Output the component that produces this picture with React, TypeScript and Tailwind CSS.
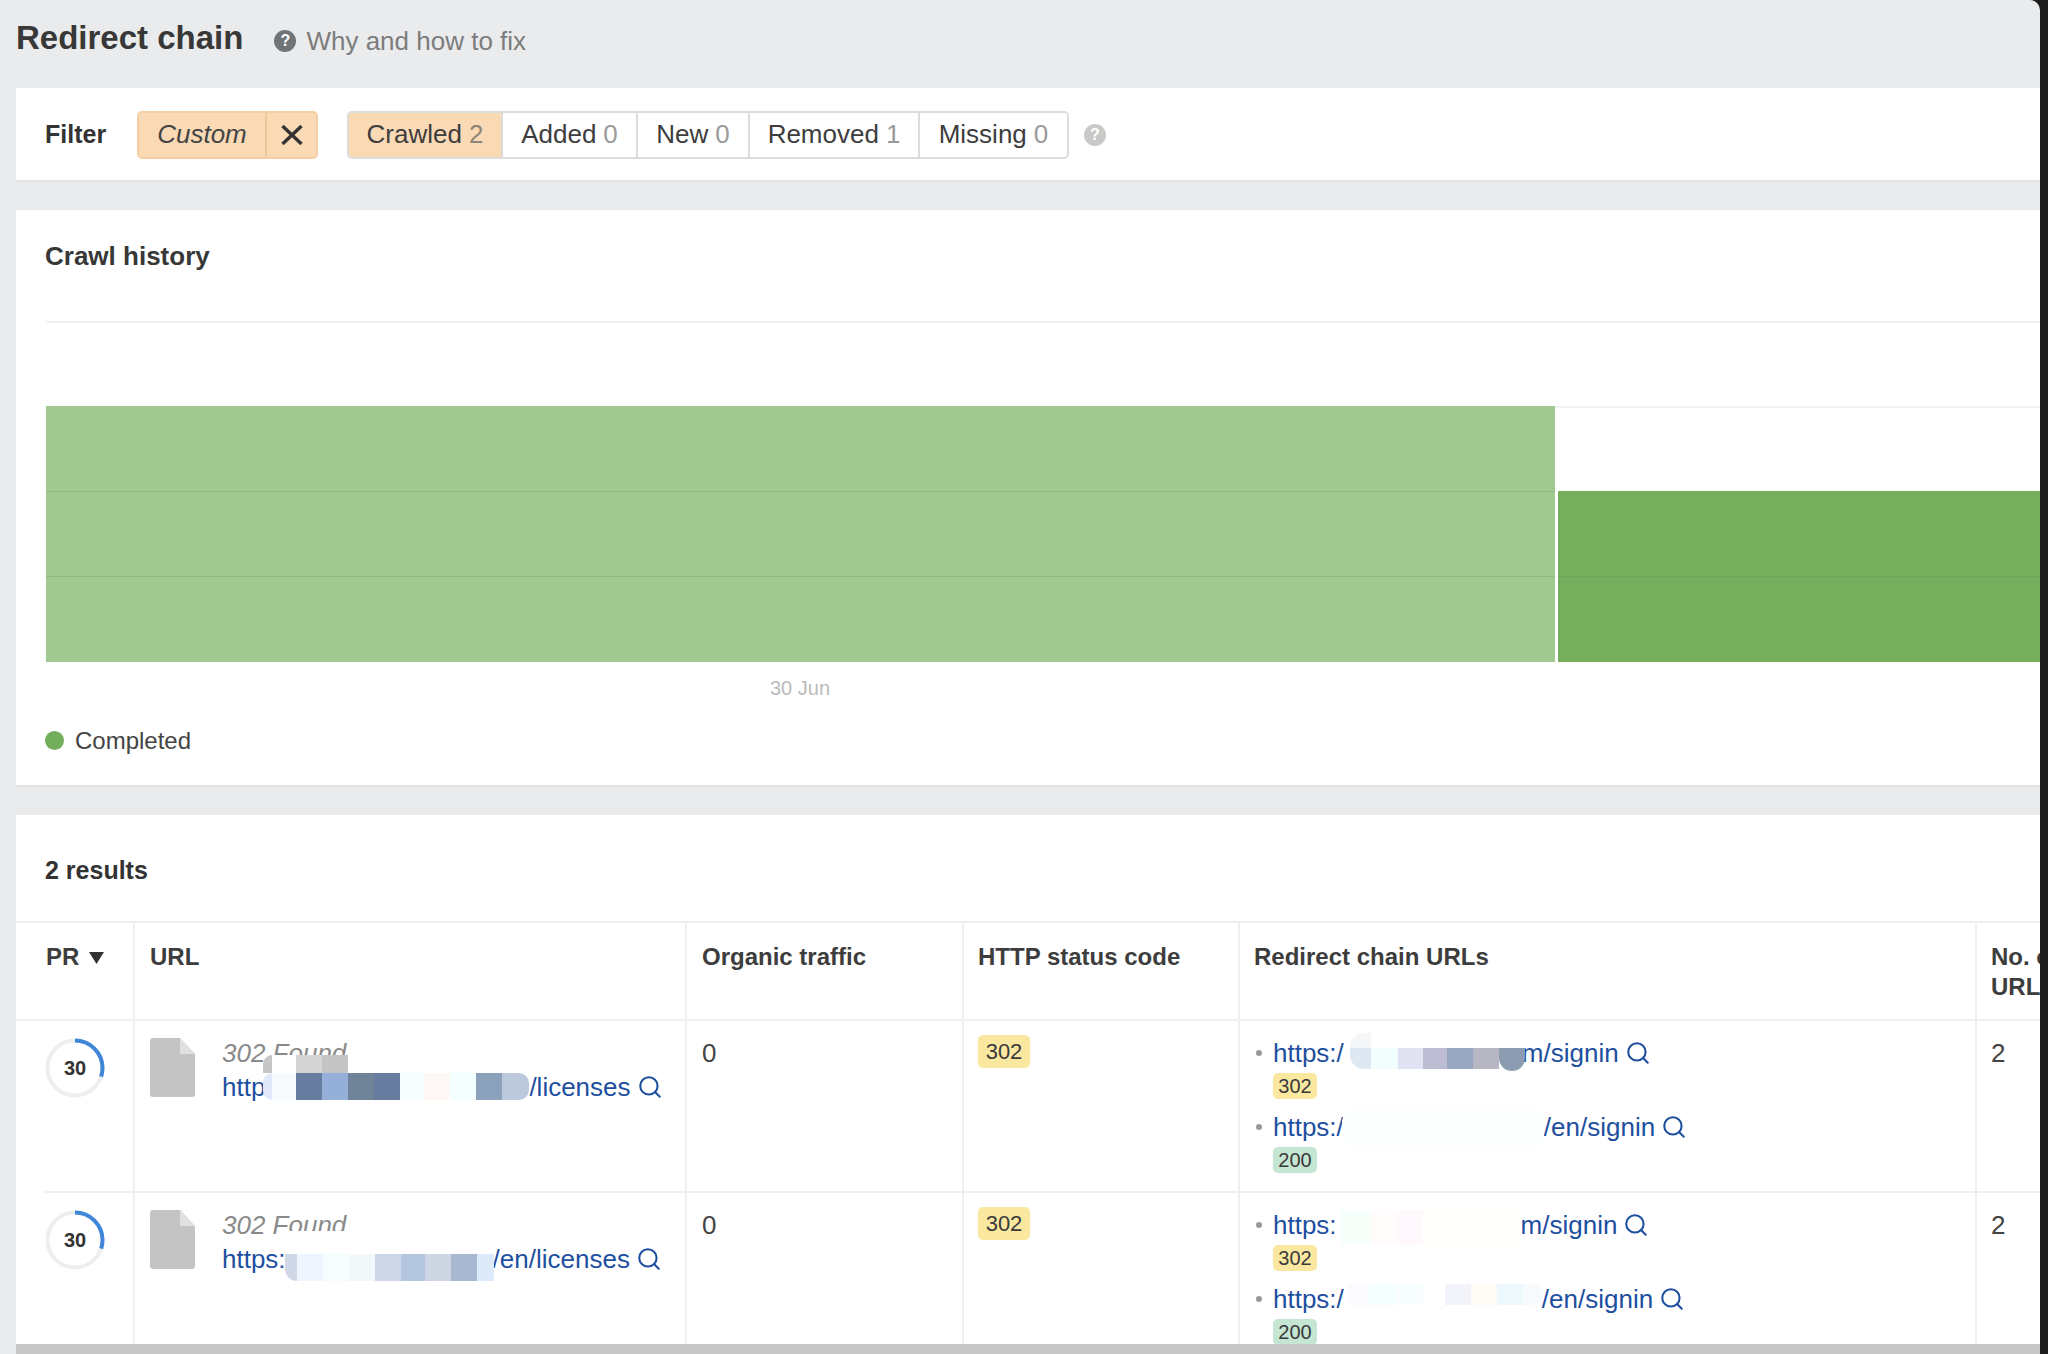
import { Search } from "lucide-react";

// censored parts of the urls, each block is a class string
const urlOneBlocks = [
  "w-[9px] h-[27px] mt-[3px] bg-[#e0e8fa] rounded-l-[12px]",
  "w-[24px] h-[27px] mt-[3px] bg-[#f7fbfe]",
  "w-[26px] h-[27px] mt-[3px] bg-[#667d9f]",
  "w-[26px] h-[27px] mt-[3px] bg-[#95b0d8]",
  "w-[26px] h-[27px] mt-[3px] bg-[#6f8399]",
  "w-[26px] h-[27px] mt-[3px] bg-[#677c9f]",
  "w-[24px] h-[27px] mt-[3px] bg-[#f7feff]",
  "w-[26px] h-[27px] mt-[3px] bg-[#fdf8f5]",
  "w-[26px] h-[27px] mt-[3px] bg-[#f4ffff]",
  "w-[26px] h-[27px] mt-[3px] bg-[#8ca1bb]",
  "w-[27px] h-[27px] mt-[3px] bg-[#bcc8dc] rounded-r-[10px]",
];

const urlTwoBlocks = [
  "w-[12px] h-[27px] mt-[12px] bg-[#d0d7e6] rounded-bl-[12px]",
  "w-[26px] h-[27px] mt-[12px] bg-[#eef5fe]",
  "w-[26px] h-[27px] mt-[12px] bg-[#f6fdfe]",
  "w-[26px] h-[27px] mt-[12px] bg-[#f2f8f9]",
  "w-[26px] h-[27px] mt-[12px] bg-[#cdd7e7]",
  "w-[24px] h-[27px] mt-[12px] bg-[#b4c6df]",
  "w-[26px] h-[27px] mt-[12px] bg-[#ced6e3]",
  "w-[26px] h-[27px] mt-[12px] bg-[#a8b8d0]",
  "w-[17px] h-[27px] mt-[12px] bg-[#ddeafa]",
];

const chainOneBlocks = [
  "w-[21px] h-[36px] -mt-[3px] bg-[linear-gradient(#f5f6f8_0_42%,#dde8f3_42%)] rounded-l-[14px]",
  "w-[27px] h-[21px] mt-[12px] bg-[#f2fdfe]",
  "w-[25px] h-[21px] mt-[12px] bg-[#e2e3f2]",
  "w-[24px] h-[21px] mt-[12px] bg-[#bcbcd2]",
  "w-[26px] h-[21px] mt-[12px] bg-[#98a6c2]",
  "w-[26px] h-[21px] mt-[12px] bg-[#b7b7c4]",
  "w-[26px] h-[23px] mt-[12px] bg-[#8c9cb1] rounded-b-[14px]",
];

const chainTwoBlocks = ["w-[202px] h-[36px] bg-[#fafefd] rounded-[12px]"];

const chainThreeBlocks = [
  "w-[30px] h-[35px] mt-[2px] bg-[#f7fffb]",
  "w-[27px] h-[35px] mt-[2px] bg-[#fffcfb]",
  "w-[25px] h-[35px] mt-[2px] bg-[#fff9fd]",
  "w-[98px] h-[35px] mt-[2px] bg-[#fffffb]",
];

const chainFourBlocks = [
  "w-[21px] h-[21px] mt-[2px] bg-[#fbfaff]",
  "w-[28px] h-[21px] mt-[2px] bg-[#f3feff]",
  "w-[26px] h-[21px] mt-[2px] bg-[#f8feff]",
  "w-[22px] h-[21px] mt-[2px] bg-white",
  "w-[26px] h-[21px] mt-[2px] bg-[#f2f4fa]",
  "w-[26px] h-[21px] mt-[2px] bg-[#fefaf6]",
  "w-[26px] h-[21px] mt-[2px] bg-[#eef9fd]",
  "w-[21px] h-[21px] mt-[2px] bg-[#f7fbfe] rounded-r-[12px]",
];

function Mosaic({ blocks, children }: { blocks: string[]; children?: React.ReactNode }) {
  return (
    <span className="relative flex h-[34px] items-start">
      {blocks.map((b, i) => (
        <span key={i} className={`block shrink-0 ${b}`} />
      ))}
      {children}
    </span>
  );
}

function HelpDot({ className }: { className: string }) {
  return (
    <span className={`flex size-[22px] shrink-0 items-center justify-center rounded-full text-[16px] leading-none font-bold text-white ${className}`}>
      ?
    </span>
  );
}

function Gauge() {
  return (
    <svg width="60" height="60" viewBox="0 0 60 60">
      <circle cx="30" cy="30" r="27.5" fill="none" stroke="#eceef0" strokeWidth="4" />
      <circle
        cx="30"
        cy="30"
        r="27.5"
        fill="none"
        stroke="#3f86d8"
        strokeWidth="4"
        strokeDasharray="51.8 172.8"
        transform="rotate(-90 30 30)"
      />
      <text x="30" y="37" textAnchor="middle" fontSize="20" fontWeight="700" fill="#333">
        30
      </text>
    </svg>
  );
}

function FileIcon() {
  return (
    <svg width="45" height="59" viewBox="0 0 45 59" className="shrink-0">
      <path d="M3 0H30L45 16V56a3 3 0 0 1-3 3H3a3 3 0 0 1-3-3V3a3 3 0 0 1 3-3Z" fill="#c4c4c4" />
      <path d="M30 0L45 16H30Z" fill="#e0e0e0" />
    </svg>
  );
}

function Badge({ code, big }: { code: string; big?: boolean }) {
  const color = code === "200" ? "bg-[#c5e6d3]" : "bg-[#fbe8a0]";
  const size = big ? "w-[52px] h-[33px] text-[22px]" : "w-[44px] h-[26px] text-[20px]";
  return <span className={`flex items-center justify-center rounded-[5px] text-[#3a3a3a] ${color} ${size}`}>{code}</span>;
}

function Lens() {
  return <Search size={26} strokeWidth={1.9} className="ml-[6px] shrink-0 text-[#1e4f9f]" />;
}

function ChainLink({ children, code, first }: { children: React.ReactNode; code: string; first?: boolean }) {
  return (
    <div className={first ? "" : "mt-[11px]"}>
      <div className="flex h-[34px] items-center text-[26px] leading-[34px] text-[#1e4f9f]">
        <span className="mr-[11px] size-[6px] shrink-0 rounded-full bg-[#999]" />
        {children}
        <Lens />
      </div>
      <div className="mt-[3px] pl-[17px]">
        <Badge code={code} />
      </div>
    </div>
  );
}

function Row({ url, chain, last }: { url: React.ReactNode; chain: React.ReactNode; last?: boolean }) {
  const line = last ? "" : "border-b-2 border-[#eeeff1]";
  const cell = `border-r-2 border-[#eeeff1] ${line}`;
  return (
    <div className="grid h-[172px] w-[2061px] grid-cols-[119px_552px_277px_276px_737px_100px] text-[26px] leading-[34px] text-[#444]">
      <div className={`ml-[29px] pt-[17px] ${cell}`}>
        <Gauge />
      </div>
      <div className={`flex gap-[27px] pt-[17px] pl-[15px] ${cell}`}>
        <FileIcon />
        <div className="-mt-[2px]">
          <div className="italic text-[#8a8a8a]">302 Found</div>
          {url}
        </div>
      </div>
      <div className={`pt-[15px] pl-[15px] ${cell}`}>0</div>
      <div className={`pt-[14px] pl-[14px] ${cell}`}>
        <Badge code="302" big />
      </div>
      <div className={`pt-[15px] pl-[16px] ${cell}`}>{chain}</div>
      <div className={`pt-[15px] pl-[14px] ${line}`}>2</div>
    </div>
  );
}

const tabs = [
  { label: "Crawled", n: "2", w: "w-[154px]", active: true },
  { label: "Added", n: "0", w: "w-[135px]" },
  { label: "New", n: "0", w: "w-[112px]" },
  { label: "Removed", n: "1", w: "w-[170px]" },
  { label: "Missing", n: "0", w: "w-[147px]" },
];

export default function App() {
  return (
    <div className="flex h-[1354px] w-[2048px] overflow-hidden bg-[#1c1c1c] font-['Liberation_Sans',Arial,sans-serif]">
      <div className="flex h-full w-[2040px] flex-col overflow-hidden rounded-tr-[10px] bg-[#eaebed] pl-[16px]">
        {/* title */}
        <div className="flex h-[88px] shrink-0 items-start">
          <h1 className="pt-[18px] text-[33px] leading-[40px] font-bold text-[#383838]">Redirect chain</h1>
          <div className="mt-[26px] ml-[31px] flex items-center gap-[10px] text-[26px] leading-[30px] text-[#7c7c7c]">
            <HelpDot className="bg-[#6f7478]" />
            Why and how to fix
          </div>
        </div>

        {/* filter */}
        <div className="flex h-[94px] shrink-0 items-center border-b-2 border-[#e2e3e5] bg-white pt-[1px] pl-[29px] text-[26px]">
          <span className="w-[92px] text-[25px] font-bold text-[#333]">Filter</span>
          <div className="flex h-[48px] w-[181px] rounded-[5px] border-2 border-[#f3cfa6] bg-[#fad9b5]">
            <span className="flex w-[128px] items-center justify-center border-r-2 border-[#ecc79c] italic text-[#444]">Custom</span>
            <span className="flex flex-1 items-center justify-center">
              <svg width="22" height="20" viewBox="0 0 22 20" fill="none" stroke="#333" strokeWidth="3.4">
                <path d="M1.5 1L20.5 19M20.5 1L1.5 19" />
              </svg>
            </span>
          </div>
          <div className="ml-[29px] flex h-[48px] overflow-hidden rounded-[5px] border-2 border-[#dcdcdc]">
            {tabs.map((t) => (
              <span
                key={t.label}
                className={`flex items-center justify-center gap-[7px] border-r-2 border-[#dcdcdc] text-[#3d3d3d] last:border-r-0 ${t.w} ${t.active ? "bg-[#fad9b5]" : "bg-white"}`}
              >
                {t.label}
                <span className={t.active ? "text-[#8d8577]" : "text-[#9a9a9a]"}>{t.n}</span>
              </span>
            ))}
          </div>
          <HelpDot className="ml-[15px] bg-[#c9c9c9]" />
        </div>

        {/* crawl history */}
        <div className="mt-[28px] shrink-0 border-b-2 border-[#e2e3e5] bg-white pl-[29px]">
          <h2 className="pt-[31px] text-[26px] leading-[30px] font-bold text-[#383838]">Crawl history</h2>
          <div className="relative mt-[50px] ml-px flex h-[341px] items-end gap-[3px]">
            <div className="absolute inset-x-0 top-0 h-[2px] bg-[#f0f1f2]" />
            <div className="absolute inset-x-0 top-[85px] h-[2px] bg-[#f0f1f2]" />
            <div className="relative h-[256px] w-[1509px] shrink-0 bg-[#a0c98f]">
              <div className="absolute inset-x-0 top-[85px] h-[1px] bg-[#8fba7d]" />
              <div className="absolute inset-x-0 top-[170px] h-[1px] bg-[#8fba7d]" />
            </div>
            <div className="relative h-[171px] flex-1 bg-[#76ae5d]">
              <div className="absolute inset-x-0 top-[85px] h-[1px] bg-[#6ea557]" />
            </div>
          </div>
          <div className="mt-[14px] w-[1510px] text-center text-[20px] leading-[24px] text-[#bbbbbb]">30 Jun</div>
          <div className="mt-[26px] flex h-[30px] items-center gap-[11px] pb-[1px] text-[24px] text-[#444]">
            <span className="size-[19px] rounded-full bg-[#72ae5c]" />
            Completed
          </div>
          <div className="h-[29px]" />
        </div>

        {/* results */}
        <div className="mt-[28px] flex min-h-0 flex-1 flex-col bg-white">
          <div className="shrink-0 pt-[40px] pb-[36px] pl-[29px] text-[25px] leading-[30px] font-bold text-[#333]">2 results</div>
          <div className="min-h-0 flex-1 overflow-hidden">
            <div className="grid h-[100px] w-[2061px] grid-cols-[119px_552px_277px_276px_737px_100px] border-y-2 border-[#eeeff1] text-[24px] leading-[30px] font-bold text-[#3d3d3d]">
              <div className="flex items-start gap-[10px] border-r-2 border-[#eeeff1] pt-[19px] pl-[30px]">
                PR
                <svg width="15" height="12" viewBox="0 0 15 12" className="mt-[10px]">
                  <path d="M0 0H15L7.5 12Z" fill="#333" />
                </svg>
              </div>
              <div className="border-r-2 border-[#eeeff1] pt-[19px] pl-[15px]">URL</div>
              <div className="border-r-2 border-[#eeeff1] pt-[19px] pl-[15px]">Organic traffic</div>
              <div className="border-r-2 border-[#eeeff1] pt-[19px] pl-[14px]">HTTP status code</div>
              <div className="border-r-2 border-[#eeeff1] pt-[19px] pl-[14px]">Redirect chain URLs</div>
              <div className="pt-[19px] pl-[14px]">No. of URLs</div>
            </div>

            <Row
              url={
                <div className="flex h-[34px] items-center text-[#1e4f9f]">
                  http
                  <span className="-ml-[2px]">
                    <Mosaic blocks={urlOneBlocks}>
                      <span className="absolute top-[-15px] left-0 flex h-[18px]">
                        <span className="w-[9px] rounded-tl-[12px] bg-[#c6c6c6]" />
                        <span className="w-[24px] bg-white" />
                        <span className="w-[26px] bg-[#d5d5d5]" />
                        <span className="w-[26px] bg-[#c4c4c4]" />
                      </span>
                    </Mosaic>
                  </span>
                  /licenses
                  <Lens />
                </div>
              }
              chain={
                <>
                  <ChainLink code="302" first>
                    https:/
                    <span className="ml-[6px]">
                      <Mosaic blocks={chainOneBlocks} />
                    </span>
                    <span className="-ml-[3px]">m/signin</span>
                  </ChainLink>
                  <ChainLink code="200">
                    https:/
                    <span className="-ml-[2px]">
                      <Mosaic blocks={chainTwoBlocks} />
                    </span>
                    /en/signin
                  </ChainLink>
                </>
              }
            />
            <Row
              last
              url={
                <div className="flex h-[34px] items-center text-[#1e4f9f]">
                  https:
                  <span className="-ml-[1px]">
                    <Mosaic blocks={urlTwoBlocks}>
                      <span className="absolute top-[-11px] left-[2px] h-[23px] w-[62px] bg-white" />
                    </Mosaic>
                  </span>
                  <span className="-ml-[1px]">/en/licenses</span>
                  <Lens />
                </div>
              }
              chain={
                <>
                  <ChainLink code="302" first>
                    https:
                    <span className="ml-[4px]">
                      <Mosaic blocks={chainThreeBlocks} />
                    </span>
                    m/signin
                  </ChainLink>
                  <ChainLink code="200">
                    https:/
                    <span className="ml-[4px]">
                      <Mosaic blocks={chainFourBlocks} />
                    </span>
                    <span className="-ml-[2px]">/en/signin</span>
                  </ChainLink>
                </>
              }
            />
          </div>
          <div className="h-[10px] shrink-0 bg-[#c8c8c8]" />
        </div>
      </div>
    </div>
  );
}
